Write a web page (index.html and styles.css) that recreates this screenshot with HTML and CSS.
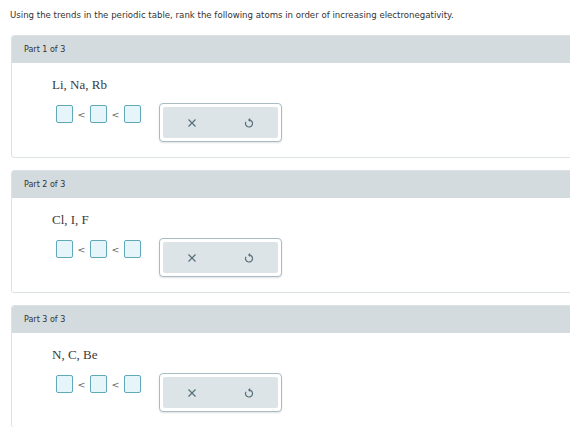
FILE: index.html
```html
<!DOCTYPE html>
<html>
<head>
<meta charset="utf-8">
<link rel="stylesheet" href="styles.css">
</head>
<body>
<div class="page">
  <p class="prompt">Using the trends in the periodic table, rank the following atoms in order of increasing electronegativity.</p>

  <section class="card">
    <div class="card-head">Part 1 of 3</div>
    <div class="card-body">
      <div class="atoms">Li, Na, Rb</div>
      <div class="answer-row">
        <div class="slots">
          <span class="slot"></span><span class="lt">&lt;</span><span class="slot"></span><span class="lt">&lt;</span><span class="slot"></span>
        </div>
        <div class="tools">
          <div class="tools-inner">
            <svg class="ico" width="10" height="10" viewBox="0 0 10 10"><path d="M1.5 1.5L8.5 8.5M8.5 1.5L1.5 8.5" stroke="#56707c" stroke-width="1.2" fill="none"/></svg>
            <svg class="ico" width="10" height="11" viewBox="0 0 10 11"><path d="M1.97 4.75A3.5 3.5 0 1 0 5 3" stroke="#56707c" stroke-width="1.2" fill="none"/><path d="M6.2 1.6L4.8 3L6.2 4.4" stroke="#56707c" stroke-width="1.2" fill="none"/></svg>
          </div>
        </div>
      </div>
    </div>
  </section>

  <section class="card">
    <div class="card-head">Part 2 of 3</div>
    <div class="card-body">
      <div class="atoms">Cl, I, F</div>
      <div class="answer-row">
        <div class="slots">
          <span class="slot"></span><span class="lt">&lt;</span><span class="slot"></span><span class="lt">&lt;</span><span class="slot"></span>
        </div>
        <div class="tools">
          <div class="tools-inner">
            <svg class="ico" width="10" height="10" viewBox="0 0 10 10"><path d="M1.5 1.5L8.5 8.5M8.5 1.5L1.5 8.5" stroke="#56707c" stroke-width="1.2" fill="none"/></svg>
            <svg class="ico" width="10" height="11" viewBox="0 0 10 11"><path d="M1.97 4.75A3.5 3.5 0 1 0 5 3" stroke="#56707c" stroke-width="1.2" fill="none"/><path d="M6.2 1.6L4.8 3L6.2 4.4" stroke="#56707c" stroke-width="1.2" fill="none"/></svg>
          </div>
        </div>
      </div>
    </div>
  </section>

  <section class="card">
    <div class="card-head">Part 3 of 3</div>
    <div class="card-body">
      <div class="atoms">N, C, Be</div>
      <div class="answer-row">
        <div class="slots">
          <span class="slot"></span><span class="lt">&lt;</span><span class="slot"></span><span class="lt">&lt;</span><span class="slot"></span>
        </div>
        <div class="tools">
          <div class="tools-inner">
            <svg class="ico" width="10" height="10" viewBox="0 0 10 10"><path d="M1.5 1.5L8.5 8.5M8.5 1.5L1.5 8.5" stroke="#56707c" stroke-width="1.2" fill="none"/></svg>
            <svg class="ico" width="10" height="11" viewBox="0 0 10 11"><path d="M1.97 4.75A3.5 3.5 0 1 0 5 3" stroke="#56707c" stroke-width="1.2" fill="none"/><path d="M6.2 1.6L4.8 3L6.2 4.4" stroke="#56707c" stroke-width="1.2" fill="none"/></svg>
          </div>
        </div>
      </div>
    </div>
  </section>
</div>
</body>
</html>
```

FILE: styles.css
```css
html, body {
  margin: 0;
  padding: 0;
  background: #ffffff;
  overflow: hidden;
}
.page {
  width: 640px;
  padding: 10px 0 0 11px;
  font-family: "DejaVu Sans", Verdana, sans-serif;
  color: #333;
}
.prompt {
  margin: 0 0 0 -1px;
  font-size: 8.6px;
  line-height: 11px;
  color: #333;
}
.card {
  margin-top: 14px;
  width: 600px;
  border: 1px solid #dde2e4;
  border-radius: 3px;
  overflow: hidden;
}
.card + .card {
  margin-top: 12px;
}
.card-head {
  height: 27px;
  line-height: 27px;
  background: #d3dbde;
  padding-left: 12px;
  font-size: 8px;
  color: #333;
}
.card-body {
  padding: 15px 0 15px 40px;
}
.atoms {
  font-family: "Liberation Serif", "Times New Roman", serif;
  font-size: 13px;
  line-height: 14px;
  color: #3a3a3a;
}
.answer-row {
  display: flex;
  align-items: flex-start;
  margin-top: 11px;
}
.slots {
  display: flex;
  align-items: center;
  margin-left: 4px;
  margin-top: 2px;
}
.slot {
  width: 15px;
  height: 16px;
  border: 1px solid #5fa9b8;
  border-radius: 2px;
  background: #e6f5f9;
}
.lt {
  width: 17px;
  text-align: center;
  font-size: 9.5px;
  color: #666;
}
.tools {
  margin-left: 18px;
  padding: 3px;
  border: 1px solid #a9bcc4;
  border-radius: 4px;
  background: #fff;
  box-shadow: 0 1px 2px rgba(0,0,0,0.12);
}
.tools-inner {
  width: 115px;
  height: 31px;
  background: #dde4e7;
  border-radius: 2px;
  display: flex;
  align-items: center;
  justify-content: space-around;
}
.ico {
  display: block;
}
```
